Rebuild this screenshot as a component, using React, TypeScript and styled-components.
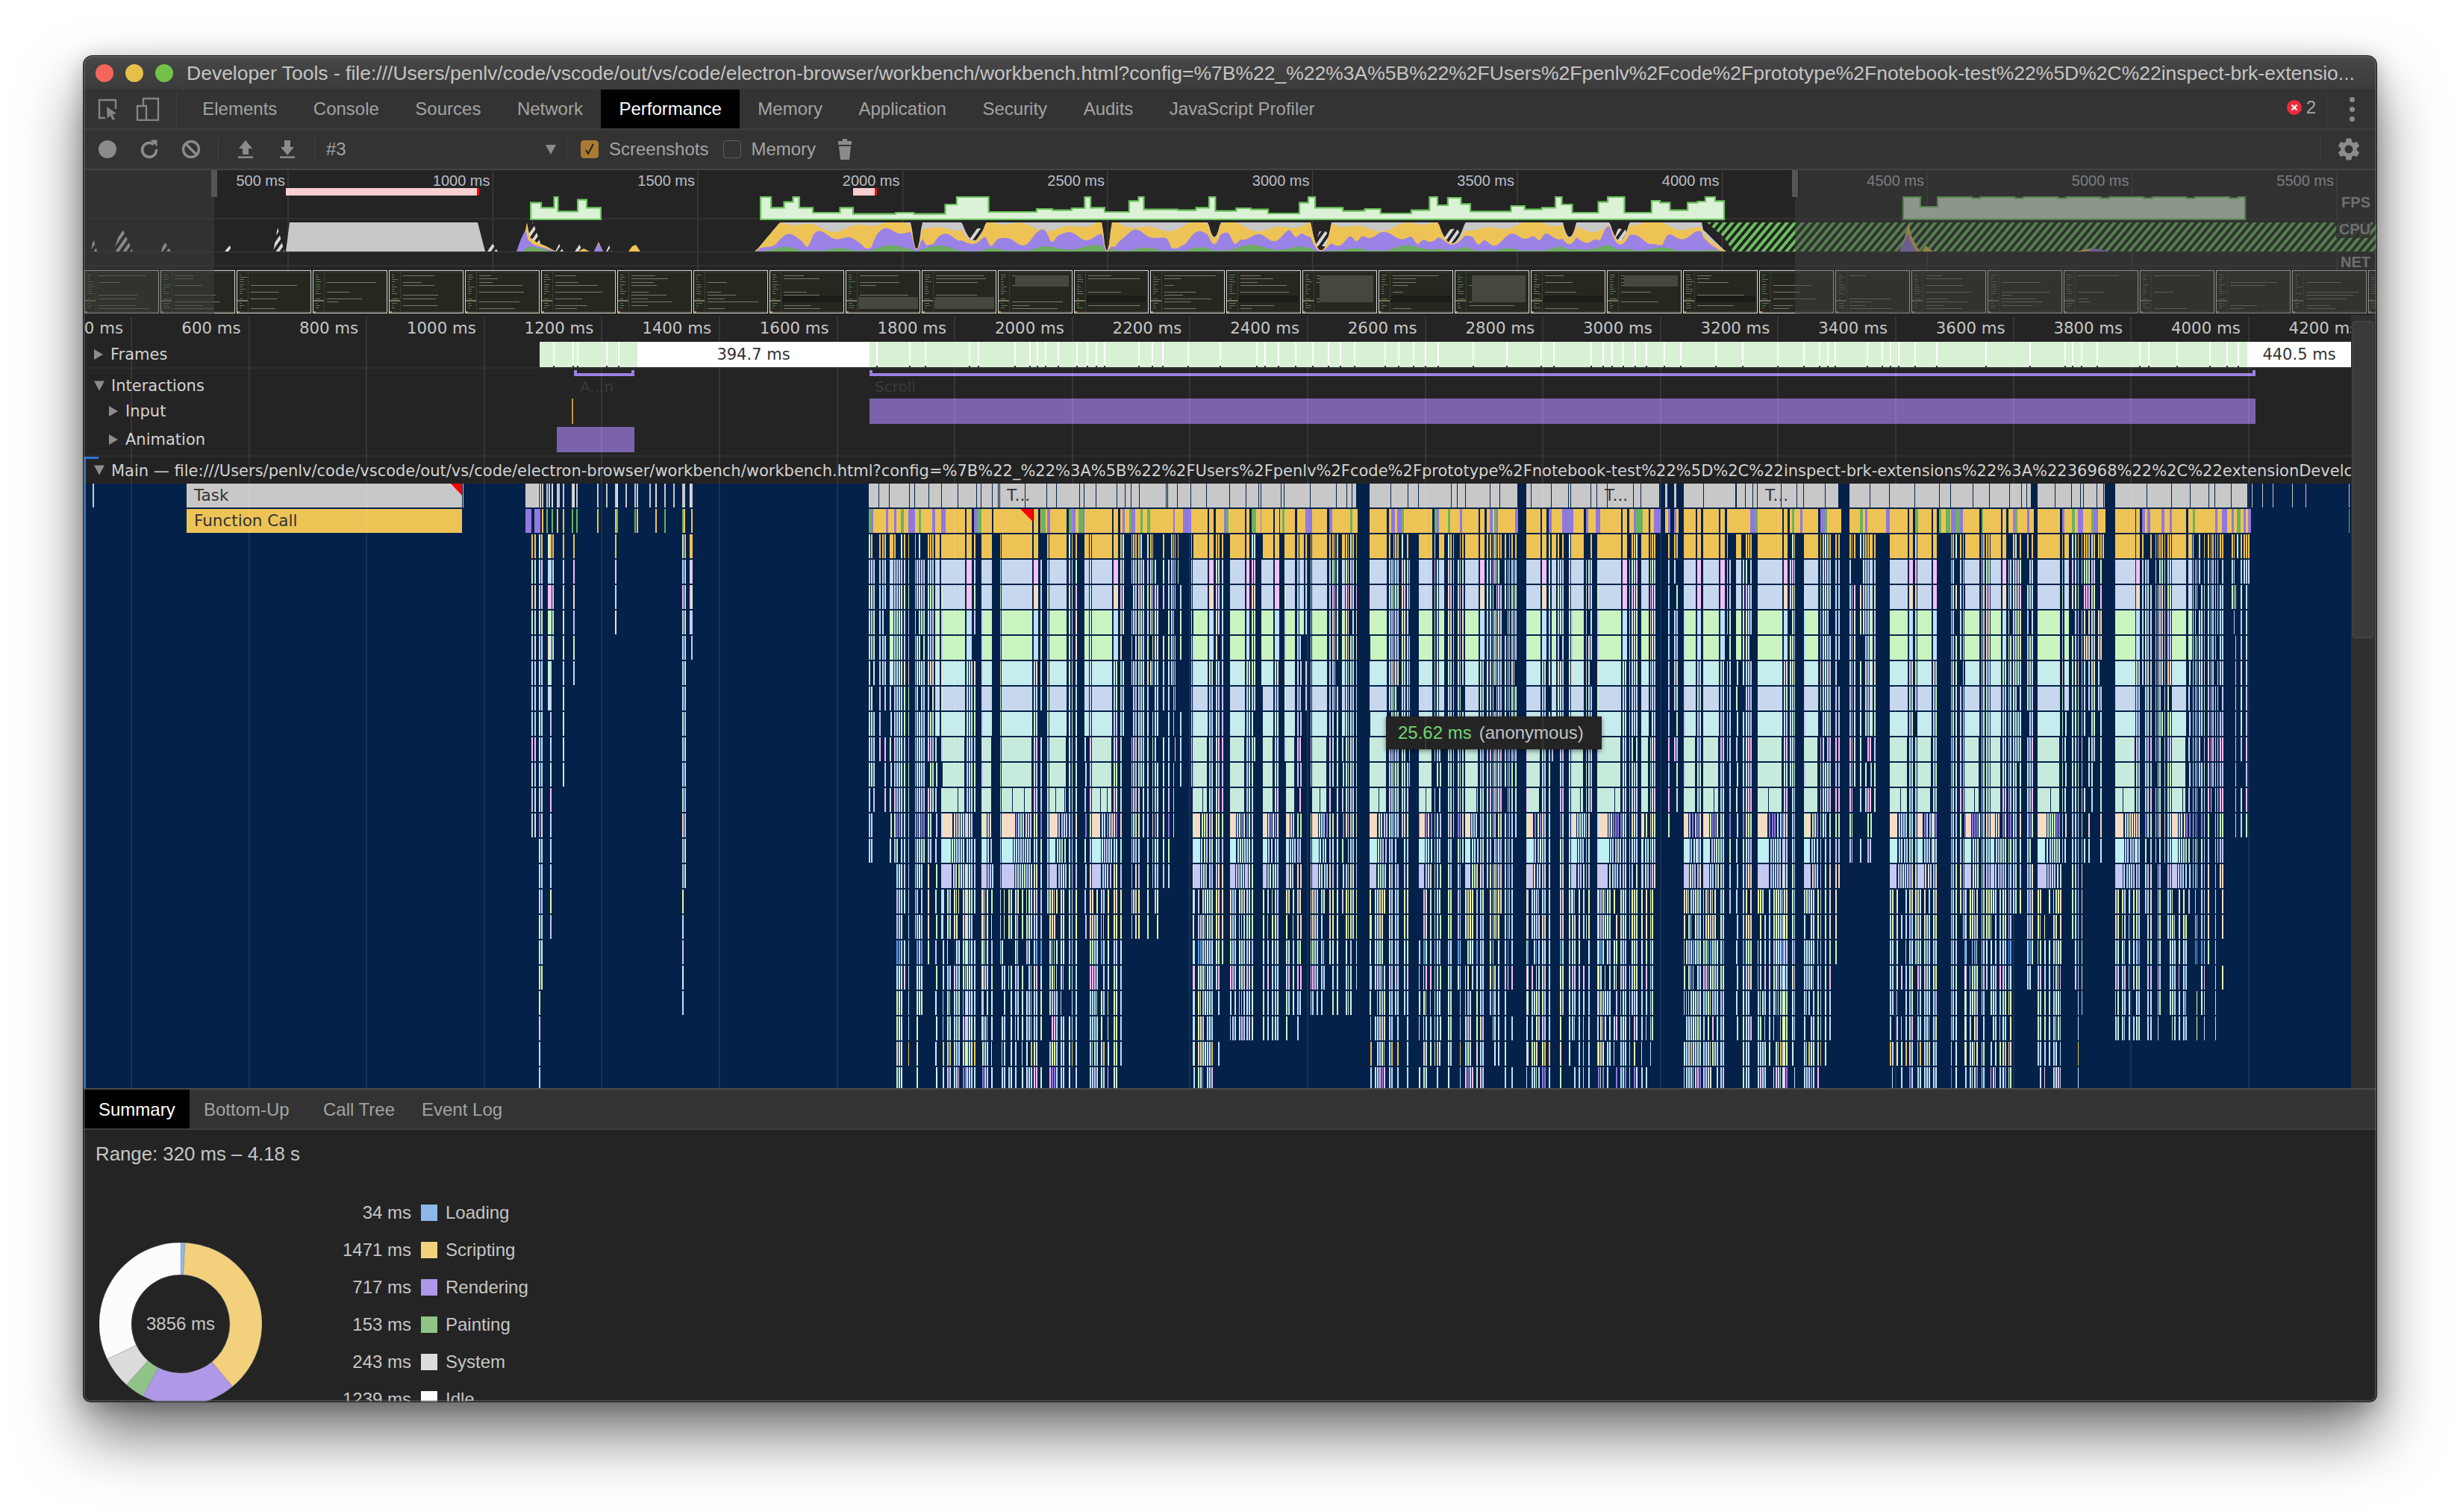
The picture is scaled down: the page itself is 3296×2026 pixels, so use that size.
import React from 'react';
import styled, { createGlobalStyle } from 'styled-components';
import { MdSettings } from 'react-icons/md';

const SANS = '"Liberation Sans", Arial, sans-serif';
const CANVAS = '"DejaVu Sans", Verdana, sans-serif';

const WIN_X = 112;

const random = (seed: number) => () => {
    seed |= 0;
    seed = (seed + 0x6d2b79f5) | 0;
    let t = Math.imul(seed ^ (seed >>> 15), 1 | seed);
    t = (t + Math.imul(t ^ (t >>> 7), 61 | t)) ^ t;
    return ((t ^ (t >>> 14)) >>> 0) / 4294967296;
};

// ---------- flame chart data ----------

const GREY = '#c8c8c8';
const YELLOW = '#eec356';
const BLUE = '#c7d7ee';
const PINK = '#f8bff2';
const SKY = '#bde0fb';
const ICE = '#d2f0ff';
const GREEN = '#c9f4c0';
const CYAN = '#c6eded';
const MINT = '#c6ebdc';
const PEACH = '#f4dcc4';
const AQUA = '#bff0f4';
const LAV = '#c5c9f2';
const PURPLE = '#8f78e0';
const DGREEN = '#69b35f';
const LIME = '#e8f7a8';
const ROYAL = '#5f9fe8';

const bigColor = [GREY, YELLOW, YELLOW, BLUE, BLUE, GREEN, GREEN, CYAN, BLUE, CYAN, MINT, MINT, MINT, PEACH, AQUA, LAV];

const stripeColors: string[][] = [
    [GREY],
    [YELLOW, PURPLE, YELLOW, DGREEN, YELLOW, PURPLE, YELLOW],
    [YELLOW, YELLOW, YELLOW, CYAN, YELLOW],
    [BLUE, SKY, GREEN, PINK, BLUE],
    [BLUE, SKY, GREEN, PINK, PEACH],
    [GREEN, SKY, LAV, PEACH, GREEN],
    [GREEN, SKY, LAV, PEACH, GREEN],
    [CYAN, BLUE, PEACH, SKY, GREEN],
    [BLUE, SKY, LAV, GREEN, BLUE],
    [CYAN, SKY, LAV, GREEN, CYAN],
    [MINT, SKY, PINK, LAV, MINT],
    [MINT, SKY, LAV, GREEN, MINT],
    [MINT, SKY, LAV, PINK, MINT],
    [PEACH, LAV, PURPLE, GREEN, SKY],
    [AQUA, SKY, GREEN, LAV, SKY],
    [LAV, GREEN, SKY, PEACH, LAV],
    [SKY, LIME, GREEN, LAV, PEACH],
    [SKY, LIME, GREEN, LAV, PEACH],
    [SKY, ICE, LAV, ROYAL, GREEN],
    [SKY, GREEN, ICE, LIME, PINK, SKY],
    [SKY, GREEN, ICE, LIME, LAV, SKY],
    [SKY, GREEN, ICE, LIME, PINK, SKY],
    [SKY, ICE, PEACH, LIME, GREEN, SKY, YELLOW],
    [SKY, PINK, ICE, GREEN, PURPLE, SKY],
];

type Seg = [number, number, [number, number][], number];

const z9 = (z: number) => 1140 + z * 0.625;
const z10 = (z: number) => 2100 + z * 0.638;
const convert = (list: Seg[], f: (z: number) => number): Seg[] =>
    list.map(([a, b, big, depth]) => [f(a), f(b), big.map(([p, q]) => [f(p), f(q)] as [number, number]), depth]);

const SEGMENTS: Seg[] = [
    ...convert([
        [38, 50, [], 15],
        [60, 75, [], 16],
        [83, 125, [], 24],
        [137, 265, [[197, 245]], 24],
        [280, 305, [[282, 303]], 24],
        [320, 408, [[323, 388]], 24],
        [420, 488, [[425, 463]], 24],
        [500, 583, [[517, 560]], 24],
        [602, 672, [], 18],
        [680, 700, [], 16],
        [700, 712, [], 14],
        [730, 800, [[735, 765]], 24],
        [812, 868, [[812, 845]], 22],
        [880, 920, [[883, 905]], 22],
        [930, 975, [[932, 952]], 22],
        [985, 1085, [[988, 1020]], 21],
        [1112, 1205, [[1114, 1148]], 24],
        [1218, 1430, [[1218, 1247], [1316, 1345]], 24],
        [1448, 1540, [[1450, 1478]], 24],
    ], z9),
    ...convert([
        [8, 50, [[10, 35]], 24],
        [62, 148, [[65, 113]], 24],
        [155, 195, [[155, 170]], 24],
        [205, 212, [], 14],
        [224, 230, [], 14],
        [245, 345, [[245, 270], [285, 318]], 24],
        [355, 385, [], 24],
        [400, 480, [[400, 452]], 24],
        [497, 570, [[497, 527]], 24],
        [593, 655, [], 15],
        [677, 780, [[677, 715], [735, 765]], 24],
        [805, 930, [[835, 865], [888, 910]], 24],
        [930, 960, [], 24],
        [965, 975, [], 20],
        [987, 1045, [[987, 1035]], 24],
        [1060, 1080, [], 24],
        [1085, 1130, [], 15],
        [1150, 1385, [[1150, 1192], [1270, 1300]], 22],
        [1395, 1430, [], 14],
    ], z10),
];

// gaps that stay dark in the two top rows as well
const OPEN_GAPS = [2034, 2224, 2235, 2247, 2464, 2722, 2821];
const isOpenGap = (x: number) => OPEN_GAPS.some((g) => Math.abs(g - x) < 3);

// thin runs on the left of the long task: x, width, rows
const LEFT_RUNS: [number, number, number][] = [
    [712, 2, 14], [716, 2, 14], [722, 1.5, 24], [725, 1.5, 20], [734, 3, 9], [737, 2, 18],
    [740, 2, 7], [754, 1.5, 12], [768, 1.5, 8], [824, 1.5, 6], [914, 2, 21], [917, 1.5, 16], [924, 1.5, 6], [926, 1.5, 7],
];
const LEFT_TOP: number[] = [704, 708, 712, 716, 720, 723, 726, 732, 735, 739, 746, 748, 754, 766, 768, 772, 800, 812, 824, 826, 838, 850, 853, 870, 878, 890, 902, 914, 916, 924, 926];
const RIGHT_TOP: number[] = [3017, 3031, 3045, 3071, 3089, 3147];

const ROW = 34;
const TOP = 648;
const BAR = 32;

const buildFlame = () => {
    const rnd = random(4242);
    const paths: Record<string, string[]> = {};
    const box = (color: string, x: number, row: number, w: number) => {
        if (w <= 0) return;
        (paths[color] = paths[color] || []).push(`M${x.toFixed(1)} ${TOP + row * ROW}h${w.toFixed(1)}v${BAR}h${(-w).toFixed(1)}z`);
    };
    const tone = (d: number, k: number) => {
        const list = stripeColors[d];
        return list[(k + Math.floor(d / 4)) % list.length];
    };
    const pick = (list: string[]) => list[Math.floor(rnd() * list.length)];

    SEGMENTS.forEach((seg, i) => {
        const [a, b, big, depth] = seg;
        const next = SEGMENTS[i + 1];
        const gapAfter = next ? next[0] - b : 99;
        // the two top rows carry over the short gaps
        const bridged = gapAfter < 16 && !isOpenGap(b);
        const topEnd = bridged ? next[0] : b;
        let tx = a;
        while (tx < topEnd) {
            const inBig = big.some(([p, q]) => tx >= p && tx < q);
            const w = inBig ? 18 + rnd() * 26 : 6 + rnd() * 30;
            box(GREY, tx, 0, Math.min(w, topEnd - tx) - 1);
            tx += w;
        }
        if (bridged) {
            let fx = Math.round(b);
            while (fx < next[0]) {
                const w = rnd() < 0.5 ? 6 : 3;
                box(pick(stripeColors[1]), fx, 1, Math.min(w, next[0] - fx));
                fx += w;
            }
        }
        let x = Math.round(a);
        let run = 3 + Math.floor(rnd() * 4);
        while (x < b) {
            const cur = big.find(([p, q]) => x >= p && x < q);
            if (cur) {
                const [p, q] = cur;
                const w = q - p;
                for (let d = 1; d < Math.min(depth, 16); d++) {
                    if (d >= 13) {
                        const part = w * (0.34 + rnd() * 0.14);
                        box(bigColor[d], p, d, part);
                        let sx = Math.round(p + part + 1.5);
                        while (sx < q) {
                            box(pick(stripeColors[d]), sx, d, 2);
                            sx += 3 + (rnd() < 0.3 ? 1 : 0);
                        }
                    } else if (d >= 10) {
                        let sx = p;
                        const step = d === 12 ? 15 : d === 11 ? 42 : 400;
                        while (sx < q) {
                            const sw = Math.min(step * (0.6 + rnd()), q - sx);
                            box(bigColor[d], sx, d, sw - 1);
                            sx += sw;
                        }
                    } else {
                        box(bigColor[d], p, d, w);
                    }
                }
                let sx = Math.round(p);
                while (sx < q) {
                    const k = Math.floor(rnd() * 8);
                    for (let d = 16; d < depth; d++) {
                        if (rnd() < 0.9) box(tone(d, k), sx, d, rnd() < 0.85 ? 2 : 1);
                    }
                    sx += 3 + (rnd() < 0.4 ? 3 : 0);
                }
                // the accent column that follows a long call
                if (q + 9 < b && rnd() < 0.8) {
                    const ax = Math.round(q + 2);
                    const aw = 4 + Math.round(rnd() * 3);
                    box(YELLOW, ax, 1, aw);
                    box(YELLOW, ax, 2, aw);
                    box(PINK, ax, 3, aw);
                    box(rnd() < 0.5 ? PINK : PEACH, ax, 4, aw);
                    box(SKY, ax, 5, aw);
                    box(SKY, ax, 6, aw);
                    for (let d = 7; d < depth; d++) {
                        let ox = ax;
                        while (ox < ax + aw) {
                            box(pick(stripeColors[d]), ox, d, 2);
                            ox += 3;
                        }
                    }
                    x = ax + aw + 3;
                } else {
                    x = Math.round(q + 3);
                }
                continue;
            }
            const tail = rnd();
            const limit = Math.round(depth - tail * tail * tail * 14);
            const k = Math.floor(rnd() * 8);
            let gap = rnd() < 0.6 ? 1 : 2;
            run--;
            if (run <= 0) {
                // a dark channel between groups of thin calls
                gap = 3 + Math.floor(rnd() * 5);
                run = 3 + Math.floor(rnd() * 5);
            }
            if (rnd() < 0.05) {
                // a short call in the middle of a burst, several rows of solid colour
                const w = 4 + Math.round(rnd() * 3);
                const solid = 6 + Math.floor(rnd() * 5);
                box(YELLOW, x, 1, w + gap);
                for (let d = 2; d < limit; d++) {
                    if (d < solid) box(bigColor[d], x, d, w);
                    else box(tone(d, k), x + (d % 2), d, 2);
                }
                x += w + gap;
                continue;
            }
            const w = rnd() < 0.8 ? 2 : 1;
            box(tone(1, k), x, 1, w + gap);
            const stop = depth <= 18 ? 0.1 : 0.04;
            for (let d = 2; d < limit; d++) {
                if (d === 2 && k % 5 === 4) continue;
                if (rnd() < stop) continue;
                box(tone(d, k), x, d, w);
            }
            x += w + gap;
        }
    });

    LEFT_TOP.forEach((x, i) => {
        box(i % 5 === 4 ? '#dedede' : GREY, x, 0, i < 4 ? 3.5 : 1.6);
        if (i % 3 !== 2) box(i < 5 ? PURPLE : i % 2 ? DGREEN : YELLOW, x, 1, i < 5 ? 3.5 : 1.6);
    });
    LEFT_RUNS.forEach(([x, w, rows]) => {
        for (let d = 2; d < rows; d++) box(pick(stripeColors[d]), x, d, w);
    });
    RIGHT_TOP.forEach((x) => box(GREY, x, 0, 1.2));
    box(DGREEN, 3147, 1, 1.2);

    return Object.keys(paths).map((color) => ({ color, d: paths[color].join('') }));
};

const FLAME = buildFlame();

// ---------- overview data ----------

const FPS_A: [number, number][] = [[873, 635], [893, 655], [918, 612], [925, 670], [963, 623], [980, 655], [1007, 700]];
const FPS_B: [number, number][] = [[1313, 612], [1333, 655], [1358, 632], [1375, 612], [1387, 655], [1413, 675], [1465, 655], [1490, 680]];
const FPS_C: [number, number][] = [[0, 675], [35, 680], [95, 642], [117, 612], [178, 672], [270, 660], [300, 665], [337, 657], [362, 612], [373, 655], [400, 672], [447, 628], [465, 612], [475, 662], [540, 665], [575, 655], [600, 612], [612, 668], [652, 657], [680, 662], [713, 678], [773, 635], [790, 612], [803, 655], [856, 668], [898, 660], [928, 678], [987, 665], [1022, 612], [1037, 645], [1057, 615], [1082, 640], [1100, 670], [1178, 648], [1204, 662], [1237, 655], [1263, 612], [1275, 642], [1295, 675], [1345, 632], [1363, 612], [1395, 675], [1447, 627], [1463, 635], [1482, 665], [1516, 635], [1535, 630], [1550, 612]];
const FPS_D: [number, number][] = [[0, 675], [20, 627], [38, 632], [55, 665], [90, 635], [110, 630], [128, 612], [140, 628]];

const stepPath = (pts: [number, number][], end: number) => {
    const first = pts[0][0];
    let d = `M${first} 294`;
    pts.forEach(([x, y], i) => {
        const nx = i + 1 < pts.length ? pts[i + 1][0] : end;
        d += `L${x} ${y}L${nx} ${y}`;
    });
    return `${d}L${end} 294Z`;
};

const fpsA = stepPath(FPS_A.map(([x, y]) => [100 + x * 0.7, 60 + y / 3]), 805);
const fpsB = stepPath(
    [
        ...FPS_B.map(([x, y]) => [100 + x * 0.7, 60 + y / 3] as [number, number]),
        ...FPS_C.map(([x, y]) => [1200 + x * 0.7, 60 + y / 3] as [number, number]),
        ...FPS_D.map(([x, y]) => [2200 + x * 0.7, 60 + y / 3] as [number, number]).filter(([x]) => x > 2290),
    ],
    2310,
);
const fpsDim = stepPath(
    Array.from({ length: 40 }, (_, i) => {
        const x = 2550 + i * 11.5;
        const dip = x > 2570 && x < 2590;
        return [x, dip ? 277 : 264 + (i % 5 === 3 ? 1.5 : 0)] as [number, number];
    }),
    3008,
);

const DIPS: [number, number, number][] = [
    [1228, 7, 0.92], [1305, 16, 0.62], [1483, 6, 1], [1627, 8, 0.5], [1770, 14, 0.98],
    [1945, 18, 0.72], [2103, 9, 0.5], [2170, 13, 0.62],
];

const cpuLayers = () => {
    const xs: number[] = [];
    for (let x = 1012; x <= 2312; x += 2) xs.push(x);
    const total = (x: number) => {
        let v = 1;
        if (x < 1045) v = Math.max(0, (x - 1012) / 33);
        if (x > 2280) v = Math.max(0, (2312 - x) / 32) * 0.8;
        DIPS.forEach(([c, w, depth]) => {
            const t = Math.abs(x - c) / w;
            if (t < 1) v *= 1 - depth * (1 - t * t);
        });
        return v;
    };
    const green = xs.map((x) => total(x) * Math.max(0.03, 0.09 + 0.08 * Math.sin(x / 11) + 0.06 * Math.sin(x / 37)));
    const purple = xs.map((x, i) => {
        const notch = 0.3 * Math.pow(Math.max(0, Math.sin(x / 13)), 10);
        return green[i] + total(x) * Math.max(0.08, 0.42 + 0.14 * Math.sin(x / 17) + 0.12 * Math.sin(x / 6.7 + 1) - notch);
    });
    const yellow = xs.map((x, i) => {
        const top = 0.88 + 0.13 * Math.sin(x / 23) + 0.08 * Math.sin(x / 9);
        return total(x) * Math.min(1, top) < purple[i] + 0.04 ? purple[i] + 0.04 : total(x) * Math.min(1, top);
    });
    const grey = xs.map((x) => total(x));
    const toPath = (vals: number[]) =>
        `M${xs[0]} 337` + vals.map((v, i) => `L${xs[i]} ${(337 - Math.min(v, 1) * 39).toFixed(1)}`).join('') + `L${xs[xs.length - 1]} 337Z`;
    return { grey: toPath(grey), yellow: toPath(yellow), purple: toPath(purple), green: toPath(green) };
};

const CPU = cpuLayers();

const OVERVIEW_TICKS = Array.from({ length: 11 }, (_, i) => ({ x: 386 + i * 274.5, label: `${500 * (i + 1)} ms` }));

const RULER_TICKS = Array.from({ length: 20 }, (_, i) => ({ x: 175 + i * 157.6, label: `${400 + i * 200} ms` }));

// ---------- filmstrip ----------

type Kind = 'editor' | 'list' | 'top' | 'tall' | 'bottom';

const KINDS: Kind[] = [
    'editor', 'editor', 'editor', 'editor', 'editor', 'editor', 'editor', 'editor', 'editor', 'list',
    'bottom', 'bottom', 'top', 'list', 'editor', 'list', 'tall', 'list', 'tall', 'list',
    'top', 'list', 'editor', 'editor', 'editor', 'editor', 'editor', 'editor', 'editor', 'editor', 'editor',
];

const Thumb: React.FC<{ kind: Kind; seed: number }> = ({ kind, seed }) => {
    const rnd = random(seed);
    const side = Array.from({ length: 15 }, (_, i) => ({ y: 5 + i * 3.3, w: 2 + rnd() * 8, c: rnd() < 0.4 ? '#4f7a52' : '#6d6f60' }));
    const lines = Array.from({ length: 11 }, (_, i) => ({ y: 6 + i * 4.6, w: 14 + rnd() * 60, on: rnd() < 0.62 }));
    return (
        <svg width="100%" height="100%" viewBox="0 0 100 58" preserveAspectRatio="none" shapeRendering="crispEdges">
            <rect width="100" height="58" fill="#26271f" />
            <rect x="14" y="0" width="0.8" height="58" fill="#3b3c32" />
            <rect x="0" y="1" width="100" height="1.5" fill="#35362c" />
            {side.map((s, i) => (
                <rect key={i} x="3" y={s.y} width={s.w} height="1" fill={s.c} />
            ))}
            <rect x="0" y="40" width="14" height="2" fill="#77775a" />
            {lines.map((l, i) => l.on && <rect key={i} x="18" y={l.y} width={l.w} height="0.9" fill="#77786b" />)}
            {kind === 'top' && <rect x="22" y="6" width="74" height="16" fill="#45493d" />}
            {kind === 'tall' && <rect x="22" y="6" width="74" height="38" fill="#45493d" />}
            {kind === 'bottom' && <rect x="16" y="36" width="82" height="17" fill="#45493d" />}
            {kind === 'list' && <rect x="16" y="34" width="82" height="10" fill="#1b1c16" />}
            <rect x="0" y="55.5" width="100" height="2.5" fill="#3a3b30" />
            <rect x="0" y="55.5" width="3" height="2.5" fill="#c8802a" />
        </svg>
    );
};

// ---------- donut ----------

const DONUT = [
    { v: 34, c: '#8db7ea', ms: '34 ms', name: 'Loading' },
    { v: 1471, c: '#f2d07c', ms: '1471 ms', name: 'Scripting' },
    { v: 717, c: '#af98e8', ms: '717 ms', name: 'Rendering' },
    { v: 153, c: '#8fc387', ms: '153 ms', name: 'Painting' },
    { v: 243, c: '#dcdcdc', ms: '243 ms', name: 'System' },
    { v: 1239, c: '#fcfcfc', ms: '1239 ms', name: 'Idle' },
];

const donutPaths = () => {
    const sum = DONUT.reduce((s, d) => s + d.v, 0);
    const R = 109;
    const r = 66;
    let a = 0;
    return DONUT.map((d) => {
        const a0 = a;
        a += (d.v / sum) * Math.PI * 2;
        const p = (rad: number, t: number) => `${(109 + rad * Math.sin(t)).toFixed(2)} ${(109 - rad * Math.cos(t)).toFixed(2)}`;
        const large = a - a0 > Math.PI ? 1 : 0;
        return {
            c: d.c,
            d: `M${p(R, a0)}A${R} ${R} 0 ${large} 1 ${p(R, a)}L${p(r, a)}A${r} ${r} 0 ${large} 0 ${p(r, a0)}Z`,
        };
    });
};

// ---------- frames bar ----------

const cellsFor = (width: number, seed: number) => {
    const rnd = random(seed);
    const cells: number[] = [];
    let left = width;
    while (left > 0) {
        const w = Math.min(left, rnd() < 0.5 ? 8 + rnd() * 14 : 20 + rnd() * 46);
        cells.push(w);
        left -= w + 2;
    }
    return cells;
};

const TABS = ['Elements', 'Console', 'Sources', 'Network', 'Performance', 'Memory', 'Application', 'Security', 'Audits', 'JavaScript Profiler'];
const BOTTOM_TABS = [
    { name: 'Summary', w: 142 },
    { name: 'Bottom-Up', w: 160 },
    { name: 'Call Tree', w: 132 },
    { name: 'Event Log', w: 132 },
];

const TITLE = 'Developer Tools - file:///Users/penlv/code/vscode/out/vs/code/electron-browser/workbench/workbench.html?config=%7B%22_%22%3A%5B%22%2FUsers%2Fpenlv%2Fcode%2Fprototype%2Fnotebook-test%22%5D%2C%22inspect-brk-extensio...';
const MAIN_TITLE = 'Main — file:///Users/penlv/code/vscode/out/vs/code/electron-browser/workbench/workbench.html?config=%7B%22_%22%3A%5B%22%2FUsers%2Fpenlv%2Fcode%2Fprototype%2Fnotebook-test%22%5D%2C%22inspect-brk-extensions%22%3A%2236968%22%2C%22extensionDevelc';

export default function App() {
    return (
        <Page>
            <GlobalStyle />
            <Window>
                <TitleBar>
                    <Light $color="#f4665c" />
                    <Light $color="#e4c04b" />
                    <Light $color="#74c14a" />
                    <TitleText>{TITLE}</TitleText>
                </TitleBar>

                <TabBar>
                    <TabIcons>
                        <svg width="30" height="30" viewBox="0 0 30 30">
                            <path d="M11 27H3V3h22v12" fill="none" stroke="#858585" strokeWidth="2.4" />
                            <path d="M13 12l13 9-5.5 1.5 3.5 6-3 1.5-3.2-6-4 3.5z" fill="#858585" />
                        </svg>
                        <svg width="32" height="32" viewBox="0 0 32 32">
                            <path d="M10 11V2h20v29H14" fill="none" stroke="#858585" strokeWidth="2.4" />
                            <rect x="2" y="12" width="12" height="19" fill="none" stroke="#858585" strokeWidth="2.4" />
                        </svg>
                    </TabIcons>
                    <Divider $h={44} />
                    <Tabs>
                        {TABS.map((t) => (
                            <Tab key={t} $active={t === 'Performance'}>
                                {t}
                            </Tab>
                        ))}
                    </Tabs>
                    <ErrorBadge>
                        <svg width="20" height="20" viewBox="0 0 20 20">
                            <circle cx="10" cy="10" r="10" fill="#ee2b3c" />
                            <path d="M6.5 6.5l7 7M13.5 6.5l-7 7" stroke="#fff" strokeWidth="2.2" />
                        </svg>
                        <span>2</span>
                    </ErrorBadge>
                    <Divider $h={44} />
                    <Dots>
                        <i />
                        <i />
                        <i />
                    </Dots>
                </TabBar>

                <Toolbar>
                    <ToolIcon $w={54}>
                        <svg width="24" height="24" viewBox="0 0 24 24">
                            <circle cx="12" cy="12" r="12" fill="#8b8b8b" />
                        </svg>
                    </ToolIcon>
                    <ToolIcon $w={58}>
                        <svg width="28" height="28" viewBox="0 0 28 28">
                            <path d="M20 7.5A9.5 9.5 0 1 0 23.5 14" fill="none" stroke="#8b8b8b" strokeWidth="3.6" />
                            <path d="M15.5 1.5h9v9z" fill="#8b8b8b" />
                        </svg>
                    </ToolIcon>
                    <ToolIcon $w={54}>
                        <svg width="28" height="28" viewBox="0 0 28 28">
                            <circle cx="14" cy="14" r="10.5" fill="none" stroke="#8b8b8b" strokeWidth="3.4" />
                            <path d="M7 7l14 14" stroke="#8b8b8b" strokeWidth="3.4" />
                        </svg>
                    </ToolIcon>
                    <Spacer $w={9} />
                    <Divider $h={34} />
                    <ToolIcon $w={72}>
                        <svg width="22" height="24" viewBox="0 0 22 24">
                            <path d="M11 0l9 11h-5v8H7v-8H2zM1 21.5h20V24H1z" fill="#8b8b8b" />
                        </svg>
                    </ToolIcon>
                    <ToolIcon $w={40}>
                        <svg width="22" height="24" viewBox="0 0 22 24">
                            <path d="M7 0h8v9h5l-9 11L2 9h5zM1 21.5h20V24H1z" fill="#8b8b8b" />
                        </svg>
                    </ToolIcon>
                    <Spacer $w={16} />
                    <Divider $h={34} />
                    <RecordingSelect>
                        <span>#3</span>
                        <Caret />
                    </RecordingSelect>
                    <Divider $h={34} />
                    <Check $on>
                        <svg width="16" height="18" viewBox="0 0 16 18">
                            <path d="M3 10l3 5 7-13" fill="none" stroke="#222" strokeWidth="2" />
                        </svg>
                    </Check>
                    <CheckLabel $gap={14} $after={2}>Screenshots</CheckLabel>
                    <Check />
                    <CheckLabel $gap={13} $after={21}>Memory</CheckLabel>
                    <ToolIcon $w={36}>
                        <svg width="20" height="28" viewBox="0 0 20 28">
                            <path d="M7 0h6v3h6v5H1V3h6zM2 10h16l-2 18H4z" fill="#8b8b8b" />
                        </svg>
                    </ToolIcon>
                    <Grow />
                    <Divider $h={34} />
                    <Gear>
                        <MdSettings size={36} color="#8b8b8b" />
                    </Gear>
                </Toolbar>

                <Overview>
                    <OverviewChart viewBox="112 228 3072 134" width="3072" height="134">
                        <defs>
                            <pattern id="hatch" width="8" height="8" patternUnits="userSpaceOnUse" patternTransform="rotate(35)">
                                <rect width="4" height="8" fill="#d8d8d8" />
                            </pattern>
                            <pattern id="greenHatch" width="8" height="8" patternUnits="userSpaceOnUse" patternTransform="rotate(40)">
                                <rect width="4" height="8" fill="#6cc25e" />
                            </pattern>
                        </defs>
                        <path d="M112 293H3184M112 337.5H3184M112 356H3184" stroke="#303030" strokeWidth="2" />
                        {OVERVIEW_TICKS.map((t) => (
                            <React.Fragment key={t.x}>
                                <path d={`M${t.x} 228V362`} stroke="#3c3c3c" strokeWidth="1.5" />
                                <OverviewLabel x={t.x - 4} y="249" textAnchor="end">
                                    {t.label}
                                </OverviewLabel>
                            </React.Fragment>
                        ))}
                        <rect x="383" y="252" width="256" height="10" fill="#f9cfd0" />
                        <rect x="639" y="252" width="3" height="10" fill="#f00" />
                        <rect x="1143" y="252" width="29" height="10" fill="#f9cfd0" />
                        <rect x="1172" y="252" width="3" height="10" fill="#f00" />

                        <path d={fpsA} fill="#dbf2d6" stroke="#6cc25e" strokeWidth="2.2" />
                        <path d={fpsB} fill="#dbf2d6" stroke="#6cc25e" strokeWidth="2.2" />
                        <path d={fpsDim} fill="#dbf2d6" stroke="#6cc25e" strokeWidth="2.2" />

                        <path d="M122 337l3-18 5 18zM152 337l11-33 15 33zM216 337l4-14 9 14zM300 337l8-8 3 8zM366 337l6-32 9 32zM653 337l6-12 8 12zM700 337l14-40 14 40zM744 337l5-10 6 10zM770 337l6-10 5 10zM812 337l4-8 4 8z" fill="url(#hatch)" />
                        <path d="M383 337L388 298H640L650 337Z" fill="#c8c8c8" />
                        <path d="M700 337L704 308L706 298L710 318L718 324L732 330L745 337Z" fill="#eec356" />
                        <path d="M692 337L698 320L704 308L708 322L715 328L735 334L745 337Z" fill="#9a82e6" />
                        <path d="M700 337L708 330L725 333L740 337Z" fill="#6dab62" />
                        <path d="M775 337L782 333L790 337ZM796 337L802 324L808 337ZM842 337L847 330L852 328L858 337Z" fill="#eec356" />
                        <path d="M796 337L802 326L808 337Z" fill="#9a82e6" />

                        <path d="M1296 326l6-16 8-4 8 0 6 14-2 8zM1760 330l8-20 8 0 8 8-6 12zM1930 328l8-20 14-2 6 10-4 12zM2160 328l8-22 10 2 2 10-6 10z" fill="url(#hatch)" />
                        <path d={CPU.grey} fill="#c8c8c8" />
                        <path d={CPU.yellow} fill="#eec356" />
                        <path d={CPU.purple} fill="#9a82e6" />
                        <path d={CPU.green} fill="#6dab62" />

                        <path d="M2287 298H3184V337H2322L2310 318Z" fill="url(#greenHatch)" />
                        <path d="M2545 337L2552 318L2557 298L2561 316L2572 337ZM2575 337L2580 329L2590 337ZM2780 337L2800 333L2815 337Z" fill="#eec356" />
                        <path d="M2545 337L2552 322L2557 312L2561 326L2568 337Z" fill="#9a82e6" />
                        <path d="M2795 337L2805 333L2820 335L2825 337Z" fill="#9a82e6" />
                    </OverviewChart>

                    <Filmstrip>
                        {KINDS.map((kind, i) => (
                            <Frame key={i}>
                                <Thumb kind={kind} seed={i + 5} />
                            </Frame>
                        ))}
                    </Filmstrip>

                    <Dim $x={0} $w={175} />
                    <Dim $x={2293} $w={779} />
                    <Grip $x={171} />
                    <Grip $x={2289} />
                    <TrackName $top={32}>FPS</TrackName>
                    <TrackName $top={68} $shade>CPU</TrackName>
                    <TrackName $top={112}>NET</TrackName>
                </Overview>

                <Timeline>
                    <TimelineMain>
                        <Ruler>
                            {RULER_TICKS.map((t) => (
                                <RulerLabel key={t.x} $x={t.x - WIN_X}>
                                    {t.label}
                                </RulerLabel>
                            ))}
                        </Ruler>

                        <FramesRow>
                            <RowLabel $w={611} $indent={36}>
                                <Arrow $open={false} $left={14} />
                                Frames
                            </RowLabel>
                            <FrameBar>
                                <FrameCells $w={131}>
                                    {[18, 24, 4, 37, 14, 24].map((w, i) => (
                                        <FrameCell key={i} $w={w} />
                                    ))}
                                </FrameCells>
                                <FrameTime $w={311}>394.7 ms</FrameTime>
                                <FrameCells $w={1846}>
                                    {cellsFor(1846, 77).map((w, i) => (
                                        <FrameCell key={i} $w={w} />
                                    ))}
                                </FrameCells>
                                <FrameTime $w={139}>440.5 ms</FrameTime>
                            </FrameBar>
                        </FramesRow>

                        <InteractionsRow>
                            <RowLabel $w={400} $indent={37}>
                                <Arrow $open $left={14} />
                                Interactions
                            </RowLabel>
                            <Bracket $x={769 - WIN_X} $w={81} />
                            <Bracket $x={1165 - WIN_X} $w={1857} />
                            <FaintLabel $x={777 - WIN_X}>A...n</FaintLabel>
                            <FaintLabel $x={1172 - WIN_X}>Scroll</FaintLabel>
                        </InteractionsRow>
                        <SubRow>
                            <RowLabel $w={400} $indent={56}>
                                <Arrow $open={false} $left={34} />
                                Input
                            </RowLabel>
                            <InputMark $x={766 - WIN_X} />
                            <IntervalBar $x={1165 - WIN_X} $w={1857} />
                        </SubRow>
                        <SubRow>
                            <RowLabel $w={400} $indent={56}>
                                <Arrow $open={false} $left={34} />
                                Animation
                            </RowLabel>
                            <IntervalBar $x={746 - WIN_X} $w={104} />
                        </SubRow>

                        <MainHeader>
                            <Arrow $open $left={14} />
                            <MainText>{MAIN_TITLE}</MainText>
                        </MainHeader>

                        <Flame>
                            <svg width="3038" height="810" viewBox="112 648 3038 810" shapeRendering="crispEdges">
                                {FLAME.map((p) => (
                                    <path key={p.color} d={p.d} fill={p.color} />
                                ))}
                                <rect x="124" y="648" width="1.5" height="32" fill={GREY} />
                                <rect x="250" y="648" width="369" height="32" fill={GREY} />
                                <rect x="620" y="648" width="1" height="32" fill={GREY} />
                                <rect x="250" y="682" width="369" height="32" fill={YELLOW} />
                                <path d="M604 648H619V664Z" fill="#f00" shapeRendering="auto" />
                                <path d="M1367 682H1384V699Z" fill="#f00" shapeRendering="auto" />
                            </svg>
                            <FlameLabel $x={260 - WIN_X} $row={0}>Task</FlameLabel>
                            <FlameLabel $x={260 - WIN_X} $row={1}>Function Call</FlameLabel>
                            <FlameLabel $x={1349 - WIN_X} $row={0}>T...</FlameLabel>
                            <FlameLabel $x={2150 - WIN_X} $row={0}>T...</FlameLabel>
                            <FlameLabel $x={2365 - WIN_X} $row={0}>T...</FlameLabel>
                            <Tooltip>
                                <b>25.62 ms</b>
                                <span>(anonymous)</span>
                            </Tooltip>
                        </Flame>

                        {RULER_TICKS.map((t) => (
                            <GridLine key={t.x} $x={t.x - WIN_X} />
                        ))}
                        <MainMarker />
                    </TimelineMain>
                    <ScrollTrack>
                        <ScrollThumb />
                    </ScrollTrack>
                </Timeline>

                <BottomTabs>
                    {BOTTOM_TABS.map((t, i) => (
                        <BottomTab key={t.name} $active={i === 0} $w={t.w}>
                            {t.name}
                        </BottomTab>
                    ))}
                </BottomTabs>

                <Summary>
                    <RangeLine>Range: 320 ms – 4.18 s</RangeLine>
                    <SummaryBody>
                        <Donut>
                            <svg width="218" height="218" viewBox="0 0 218 218">
                                {donutPaths().map((p) => (
                                    <path key={p.c} d={p.d} fill={p.c} stroke="#9a9a9a" strokeWidth="0.4" />
                                ))}
                            </svg>
                            <DonutTotal>3856 ms</DonutTotal>
                        </Donut>
                        <Legend>
                            {DONUT.map((d) => (
                                <LegendRow key={d.name}>
                                    <LegendValue>{d.ms}</LegendValue>
                                    <Swatch $color={d.c} />
                                    <LegendName>{d.name}</LegendName>
                                </LegendRow>
                            ))}
                        </Legend>
                    </SummaryBody>
                </Summary>
            </Window>
        </Page>
    );
}

const GlobalStyle = createGlobalStyle`
    html, body {
        margin: 0;
        padding: 0;
        background: #fff;
    }
    * {
        box-sizing: border-box;
    }
`;

const Page = styled.div`
    width: 3296px;
    height: 2026px;
    padding: 75px 0 0 112px;
    overflow: hidden;
    font-family: ${SANS};
    background: #fff;
`;

const Window = styled.div`
    position: relative;
    width: 3072px;
    height: 1803px;
    display: flex;
    flex-direction: column;
    overflow: hidden;
    border-radius: 12px 12px 9px 9px;
    background: #242424;
    box-shadow: 0 0 0 1px #1c1c1c, 0 44px 84px rgba(0, 0, 0, 0.55), 0 6px 30px rgba(0, 0, 0, 0.25);

    &::after {
        content: '';
        position: absolute;
        inset: 0;
        border-radius: inherit;
        box-shadow: inset 0 0 0 2px rgba(110, 110, 110, 0.45);
        pointer-events: none;
    }
`;

const TitleBar = styled.div`
    height: 45px;
    flex: none;
    display: flex;
    align-items: center;
    gap: 16px;
    padding-left: 16px;
    background: linear-gradient(#474747, #3b3b3b);
`;

const Light = styled.i<{ $color: string }>`
    width: 24px;
    height: 24px;
    flex: none;
    border-radius: 50%;
    background: ${(p) => p.$color};
`;

const TitleText = styled.div`
    margin-left: 2px;
    padding-top: 2px;
    color: #c4c4c4;
    font-size: 26.5px;
    white-space: nowrap;
    flex: 1;
    overflow: hidden;
`;

const TabBar = styled.div`
    height: 54px;
    flex: none;
    display: flex;
    align-items: center;
    background: #333;
    border-bottom: 2px solid #3e3e3e;
`;

const TabIcons = styled.div`
    width: 124px;
    display: flex;
    align-items: center;
    gap: 22px;
    padding-left: 18px;
`;

const Divider = styled.div<{ $h: number }>`
    width: 1px;
    height: ${(p) => p.$h}px;
    flex: none;
    background: #404040;
`;

const Tabs = styled.div`
    display: flex;
    flex: 1;
    height: 100%;
    padding-left: 10px;
`;

const Tab = styled.div<{ $active?: boolean }>`
    height: 52px;
    display: flex;
    align-items: center;
    padding: 0 24.25px;
    font-size: 24px;
    color: ${(p) => (p.$active ? '#fff' : '#a3a3a3')};
    background: ${(p) => (p.$active ? '#000' : 'transparent')};
`;

const ErrorBadge = styled.div`
    display: flex;
    align-items: center;
    gap: 6px;
    padding-right: 14px;
    font-size: 24px;
    color: #a6a6a6;
    transform: translateY(-2px);
`;

const Dots = styled.div`
    width: 66px;
    display: flex;
    flex-direction: column;
    align-items: center;
    gap: 6px;

    i {
        width: 7px;
        height: 7px;
        border-radius: 50%;
        background: #8b8b8b;
    }
`;

const Toolbar = styled.div`
    height: 54px;
    flex: none;
    display: flex;
    align-items: center;
    padding-left: 5px;
    background: #333;
    border-bottom: 2px solid #444;
    font-size: 24px;
    color: #a3a3a3;
`;

const ToolIcon = styled.div<{ $w: number }>`
    width: ${(p) => p.$w}px;
    flex: none;
    display: flex;
    justify-content: center;
    align-items: center;
`;

const Spacer = styled.div<{ $w: number }>`
    width: ${(p) => p.$w}px;
    flex: none;
`;

const Grow = styled.div`
    flex: 1;
`;

const RecordingSelect = styled.div`
    width: 337px;
    flex: none;
    display: flex;
    justify-content: space-between;
    align-items: center;
    padding: 0 14px 0 15px;
`;

const Caret = styled.i`
    width: 0;
    height: 0;
    border-left: 7px solid transparent;
    border-right: 7px solid transparent;
    border-top: 13px solid #8b8b8b;
`;

const Check = styled.div<{ $on?: boolean }>`
    width: 24px;
    height: 24px;
    flex: none;
    margin-left: 18px;
    display: flex;
    align-items: center;
    justify-content: center;
    border-radius: 4px;
    background: ${(p) => (p.$on ? '#a97a32' : '#333')};
    border: 1px solid ${(p) => (p.$on ? '#a97a32' : '#5e5e5e')};
`;

const CheckLabel = styled.span<{ $gap: number; $after: number }>`
    margin-left: ${(p) => p.$gap}px;
    margin-right: ${(p) => p.$after}px;
    white-space: nowrap;
`;

const Gear = styled.div`
    width: 74px;
    display: flex;
    justify-content: center;
`;

const Overview = styled.div`
    position: relative;
    height: 194px;
    flex: none;
    display: flex;
    flex-direction: column;
    overflow: hidden;
    background: #242424;
`;

const OverviewChart = styled.svg`
    display: block;
    flex: none;
`;

const OverviewLabel = styled.text`
    font-family: ${SANS};
    font-size: 20px;
    fill: #b9bdc6;
`;

const Filmstrip = styled.div`
    display: flex;
    gap: 2px;
    padding-left: 1px;
    flex: none;
`;

const Frame = styled.div`
    width: 100px;
    height: 58px;
    flex: none;
    border: 1.5px solid #d6d6d6;
    background: #26271f;
`;

const Dim = styled.div<{ $x: number; $w: number }>`
    position: absolute;
    top: 0;
    bottom: 2px;
    left: ${(p) => p.$x}px;
    width: ${(p) => p.$w}px;
    background: rgba(63, 63, 63, 0.51);
`;

const Grip = styled.div<{ $x: number }>`
    position: absolute;
    top: 0;
    left: ${(p) => p.$x}px;
    width: 9px;
    height: 36px;
    background: #555;
    border-right: 1px solid #222;
`;

const TrackName = styled.div<{ $top: number; $shade?: boolean }>`
    position: absolute;
    top: ${(p) => p.$top}px;
    right: 8px;
    padding-left: 4px;
    font-size: 20px;
    font-weight: bold;
    color: #6f6f6f;
    background: ${(p) => (p.$shade ? 'rgba(50, 50, 50, 0.8)' : 'transparent')};
`;

const Timeline = styled.div`
    height: 1036px;
    flex: none;
    display: flex;
    background: #242424;
`;

const TimelineMain = styled.div`
    position: relative;
    width: 3038px;
    flex: none;
    display: flex;
    flex-direction: column;
    overflow: hidden;
    font-family: ${CANVAS};
`;

const Ruler = styled.div`
    position: relative;
    height: 36px;
    flex: none;
`;

const RulerLabel = styled.span<{ $x: number }>`
    position: absolute;
    top: 3px;
    left: ${(p) => p.$x - 170}px;
    width: 160px;
    text-align: right;
    font-size: 21.3px;
    line-height: 30px;
    color: #c6c6c6;
`;

const GridLine = styled.div<{ $x: number }>`
    position: absolute;
    top: 2px;
    bottom: 0;
    left: ${(p) => p.$x}px;
    width: 2px;
    background: rgba(255, 255, 255, 0.08);
    pointer-events: none;
`;

const FramesRow = styled.div`
    height: 36px;
    flex: none;
    display: flex;
    border-bottom: 2px solid #2d2d2d;
`;

const RowLabel = styled.div<{ $w: number; $indent: number }>`
    position: relative;
    width: ${(p) => p.$w}px;
    flex: none;
    display: flex;
    align-items: center;
    padding-left: ${(p) => p.$indent}px;
    font-size: 21px;
    color: #d2d2d2;
`;

const Arrow = styled.i<{ $open: boolean; $left: number }>`
    position: absolute;
    left: ${(p) => p.$left}px;
    top: 50%;
    width: 0;
    height: 0;
    transform: translateY(-50%);
    ${(p) =>
        p.$open
            ? `border-left: 7px solid transparent; border-right: 7px solid transparent; border-top: 13px solid #8d8d8d;`
            : `border-top: 7px solid transparent; border-bottom: 7px solid transparent; border-left: 12px solid #8d8d8d;`}
`;

const FrameBar = styled.div`
    flex: 1;
    height: 34px;
    display: flex;
    background: #fff;
`;

const FrameCells = styled.div<{ $w: number }>`
    width: ${(p) => p.$w}px;
    flex: none;
    display: flex;
    gap: 2px;
    overflow: hidden;
`;

const FrameCell = styled.div<{ $w: number }>`
    position: relative;
    width: ${(p) => p.$w}px;
    flex: none;
    background: #d8f1d4;

    &::after {
        content: '';
        position: absolute;
        right: -2px;
        bottom: 0;
        width: 2px;
        height: 2px;
        background: #333;
    }
`;

const FrameTime = styled.div<{ $w: number }>`
    width: ${(p) => p.$w}px;
    flex: none;
    display: flex;
    align-items: center;
    justify-content: center;
    font-size: 21px;
    color: #333;
`;

const InteractionsRow = styled.div`
    position: relative;
    height: 40px;
    flex: none;
    display: flex;
    padding-top: 6px;
`;

const SubRow = styled.div`
    position: relative;
    height: 38px;
    flex: none;
    display: flex;
    padding-bottom: 4px;
`;

const Bracket = styled.div<{ $x: number; $w: number }>`
    position: absolute;
    top: 2px;
    left: ${(p) => p.$x}px;
    width: ${(p) => p.$w}px;
    height: 8px;
    border: 4px solid #9b7fe0;
    border-top: 0;
`;

const FaintLabel = styled.span<{ $x: number }>`
    position: absolute;
    top: 12px;
    left: ${(p) => p.$x}px;
    font-size: 20px;
    color: #3a3a3a;
`;

const InputMark = styled.div<{ $x: number }>`
    position: absolute;
    top: 0;
    left: ${(p) => p.$x}px;
    width: 2px;
    height: 34px;
    background: #b8983e;
`;

const IntervalBar = styled.div<{ $x: number; $w: number }>`
    position: absolute;
    top: 0;
    left: ${(p) => p.$x}px;
    width: ${(p) => p.$w}px;
    height: 34px;
    background: #7a63ab;
`;

const MainHeader = styled.div`
    position: relative;
    height: 38px;
    flex: none;
    display: flex;
    align-items: center;
    padding: 2px 0 0 37px;
    border-top: 2px solid #2d2d2d;
    background: #232323;
`;

const MainText = styled.div`
    font-size: 21px;
    white-space: nowrap;
    color: #d2d2d2;
`;

const MainMarker = styled.div`
    position: absolute;
    left: 0;
    top: 190px;
    bottom: 0;
    width: 3px;
    background: #2f74d8;

    &::after {
        content: '';
        position: absolute;
        top: 0;
        left: 0;
        width: 20px;
        height: 3px;
        background: #2f74d8;
    }
`;

const Flame = styled.div`
    position: relative;
    height: 810px;
    flex: none;
    background: #032149;

    svg {
        display: block;
    }
`;

const FlameLabel = styled.span<{ $x: number; $row: number }>`
    position: absolute;
    top: ${(p) => p.$row * 34}px;
    left: ${(p) => p.$x}px;
    font-size: 21.5px;
    line-height: 32px;
    color: #333;
`;

const Tooltip = styled.div`
    position: absolute;
    top: 312px;
    left: 1745px;
    width: 289px;
    height: 44px;
    display: flex;
    align-items: center;
    gap: 10px;
    padding-left: 16px;
    font-family: ${SANS};
    font-size: 24px;
    white-space: nowrap;
    color: #c2c2c2;
    background: #242424;
    box-shadow: 0 2px 6px rgba(0, 0, 0, 0.5);

    b {
        font-weight: normal;
        color: #6fd66f;
    }
`;

const ScrollTrack = styled.div`
    width: 34px;
    flex: none;
    padding: 8px 4px 0 2px;
    background: #303030;
`;

const ScrollThumb = styled.div`
    height: 425px;
    border: 1px solid #4c4c4c;
    border-radius: 3px;
    background: #3a3a3a;
`;

const BottomTabs = styled.div`
    height: 56px;
    flex: none;
    display: flex;
    background: #333;
    border-top: 2px solid #4a4a4a;
    border-bottom: 2px solid #3e3e3e;
`;

const BottomTab = styled.div<{ $active?: boolean; $w: number }>`
    width: ${(p) => p.$w}px;
    height: 52px;
    display: flex;
    align-items: center;
    padding-left: ${(p) => (p.$active ? 20 : 19)}px;
    padding-top: 2px;
    font-size: 24px;
    white-space: nowrap;
    color: ${(p) => (p.$active ? '#fff' : '#a3a3a3')};
    background: ${(p) => (p.$active ? '#000' : 'transparent')};
`;

const Summary = styled.div`
    flex: 1;
    overflow: hidden;
    padding: 17px 0 0 16px;
    background: #242424;
    color: #c6c6c6;
`;

const RangeLine = styled.div`
    height: 30px;
    font-size: 25.8px;
    line-height: 30px;
`;

const SummaryBody = styled.div`
    display: flex;
    margin-top: 39px;
`;

const Donut = styled.div`
    position: relative;
    width: 218px;
    height: 218px;
    flex: none;
    margin: 65px 0 0 5px;

    svg {
        display: block;
    }
`;

const DonutTotal = styled.div`
    position: absolute;
    inset: 0;
    display: flex;
    align-items: center;
    justify-content: center;
    font-size: 24px;
`;

const Legend = styled.div`
    display: flex;
    flex-direction: column;
`;

const LegendRow = styled.div`
    height: 50px;
    display: flex;
    align-items: center;
    font-size: 24px;
`;

const LegendValue = styled.span`
    width: 200px;
    text-align: right;
`;

const Swatch = styled.i<{ $color: string }>`
    width: 22px;
    height: 22px;
    margin: 0 11px 0 13px;
    background: ${(p) => p.$color};
`;

const LegendName = styled.span``;
